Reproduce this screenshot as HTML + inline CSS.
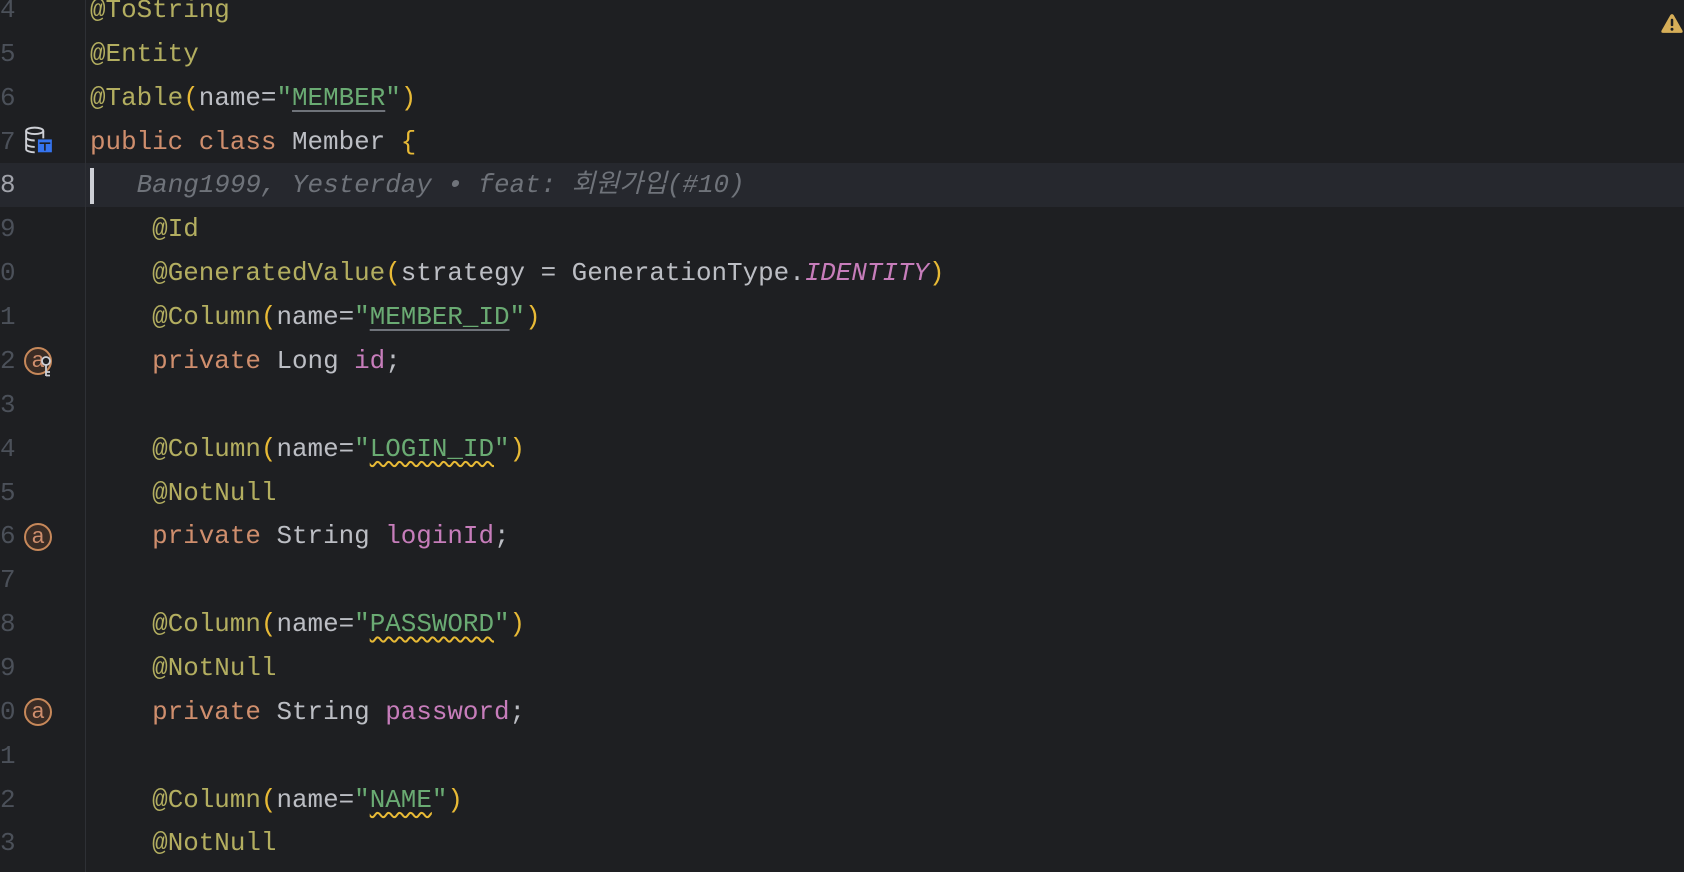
<!DOCTYPE html>
<html><head><meta charset="utf-8"><style>
html,body{margin:0;padding:0;background:#1e1f22;width:1684px;height:872px;overflow:hidden;}
body{position:relative;font-family:"Liberation Mono","Noto Sans CJK KR",monospace;font-size:25.9px;color:#bcbec4;}
.ln{position:absolute;left:0;height:43.86px;line-height:43.86px;color:#4b5059;white-space:pre;}
.cl{position:absolute;left:90px;height:43.86px;line-height:43.86px;white-space:pre;}
.a{color:#b3ae60}.k{color:#cf8e6d}.s{color:#6aab73}.f{color:#c77dbb}.p{color:#e8ba36}
.u{text-decoration:underline;text-decoration-color:#6f737a;text-underline-offset:5px}
.w{text-decoration:underline wavy #e8ba36;text-underline-offset:5px;text-decoration-thickness:1.5px}
.sep{position:absolute;left:85px;top:0;width:1px;height:872px;background:#2e3035}
.band{position:absolute;left:0;top:163px;width:1684px;height:44px;background:#26282e}
.blame{color:#6f737a;font-style:italic}
.fi{position:absolute;left:24px;width:24px;height:24px;border:2px solid #c7885a;border-radius:50%;background:#3a2c25;color:#cf8e6d;font-size:22px;line-height:22px;text-align:center;font-family:"Liberation Sans",sans-serif}
</style></head><body>
<div class="band"></div>
<div class="sep"></div>
<div style="position:absolute;left:90px;top:168px;width:4px;height:36px;background:#ced0d6"></div>

<div class="ln" style="top:-11px">4</div>
<div class="ln" style="top:32.9px">5</div>
<div class="ln" style="top:76.7px">6</div>
<div class="ln" style="top:120.6px">7</div>
<div class="ln" style="top:164.4px;color:#a1a3ab">8</div>
<div class="ln" style="top:208.3px">9</div>
<div class="ln" style="top:252.2px">0</div>
<div class="ln" style="top:296px">1</div>
<div class="ln" style="top:339.9px">2</div>
<div class="ln" style="top:383.7px">3</div>
<div class="ln" style="top:427.6px">4</div>
<div class="ln" style="top:471.5px">5</div>
<div class="ln" style="top:515.3px">6</div>
<div class="ln" style="top:559.2px">7</div>
<div class="ln" style="top:603px">8</div>
<div class="ln" style="top:646.9px">9</div>
<div class="ln" style="top:690.8px">0</div>
<div class="ln" style="top:734.6px">1</div>
<div class="ln" style="top:778.5px">2</div>
<div class="ln" style="top:822.3px">3</div>

<div class="cl" style="top:-11px"><span class="a">@ToString</span></div>
<div class="cl" style="top:32.9px"><span class="a">@Entity</span></div>
<div class="cl" style="top:76.7px"><span class="a">@Table</span><span class="p">(</span>name=<span class="s">"<span class="u">MEMBER</span>"</span><span class="p">)</span></div>
<div class="cl" style="top:120.6px"><span class="k">public class </span>Member <span class="p">{</span></div>
<div class="cl" style="top:164.4px">   <span class="blame">Bang1999, Yesterday • feat: 회원가입(#10)</span></div>
<div class="cl" style="top:208.3px">    <span class="a">@Id</span></div>
<div class="cl" style="top:252.2px">    <span class="a">@GeneratedValue</span><span class="p">(</span>strategy = GenerationType.<span class="f" style="font-style:italic">IDENTITY</span><span class="p">)</span></div>
<div class="cl" style="top:296px">    <span class="a">@Column</span><span class="p">(</span>name=<span class="s">"<span class="u">MEMBER_ID</span>"</span><span class="p">)</span></div>
<div class="cl" style="top:339.9px">    <span class="k">private </span>Long <span class="f">id</span>;</div>
<div class="cl" style="top:427.6px">    <span class="a">@Column</span><span class="p">(</span>name=<span class="s">"<span class="w">LOGIN_ID</span>"</span><span class="p">)</span></div>
<div class="cl" style="top:471.5px">    <span class="a">@NotNull</span></div>
<div class="cl" style="top:515.3px">    <span class="k">private </span>String <span class="f">loginId</span>;</div>
<div class="cl" style="top:603px">    <span class="a">@Column</span><span class="p">(</span>name=<span class="s">"<span class="w">PASSWORD</span>"</span><span class="p">)</span></div>
<div class="cl" style="top:646.9px">    <span class="a">@NotNull</span></div>
<div class="cl" style="top:690.8px">    <span class="k">private </span>String <span class="f">password</span>;</div>
<div class="cl" style="top:778.5px">    <span class="a">@Column</span><span class="p">(</span>name=<span class="s">"<span class="w">NAME</span>"</span><span class="p">)</span></div>
<div class="cl" style="top:822.3px">    <span class="a">@NotNull</span></div>

<!-- db icon -->
<svg style="position:absolute;left:24px;top:125px" width="30" height="31" viewBox="0 0 28 28">
<g fill="none" stroke="#ced0d6" stroke-width="1.8">
<ellipse cx="10" cy="5" rx="8" ry="3"/>
<path d="M2 5v17c0 1.7 3.6 3 8 3M2 11c0 1.7 3.6 3 8 3M2 17c0 1.7 3.6 3 8 3M18 5v7"/>
</g>
<rect x="13" y="13" width="13" height="12" fill="#3574f0"/>
<path d="M14.5 16.5h10M19.5 16.5v7" stroke="#1e1f22" stroke-width="1.5"/>
</svg>
<!-- field with key -->
<div class="fi" style="top:347px">a</div>
<svg style="position:absolute;left:39px;top:356px" width="14" height="22" viewBox="0 0 14 22">
<circle cx="7" cy="5" r="4" fill="#1e1f22" stroke="#ced0d6" stroke-width="1.8"/>
<path d="M7 9v11M7 16h4M7 19.5h4" stroke="#ced0d6" stroke-width="1.8" fill="none"/>
</svg>
<div class="fi" style="top:523px">a</div>
<div class="fi" style="top:698px">a</div>

<!-- warning -->
<svg style="position:absolute;left:1660px;top:12px" width="24" height="23" viewBox="0 0 23 21">
<path d="M11.5 1.5 Q12.5 1.5 13.2 2.6 L21.6 17.4 Q22.3 19.5 20 19.5 H3 Q0.7 19.5 1.4 17.4 L9.8 2.6 Q10.5 1.5 11.5 1.5Z" fill="#d6ae58"/>
<rect x="10.3" y="6" width="2.4" height="7" rx="1" fill="#1e1f22"/>
<circle cx="11.5" cy="16" r="1.4" fill="#1e1f22"/>
</svg>
</body></html>
